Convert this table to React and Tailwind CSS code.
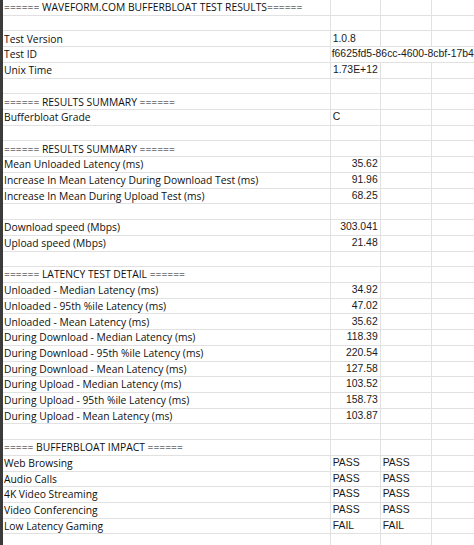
import React from "react";

const rows = [
  { a: "====== WAVEFORM.COM BUFFERBLOAT TEST RESULTS======" },
  {},
  { a: "Test Version", b: "1.0.8" },
  { a: "Test ID", b: "f6625fd5-86cc-4600-8cbf-17b4c2a9e1d3", overflow: true },
  { a: "Unix Time", b: "1.73E+12", num: true },
  {},
  { a: "====== RESULTS SUMMARY ======" },
  { a: "Bufferbloat Grade", b: "C" },
  {},
  { a: "====== RESULTS SUMMARY ======" },
  { a: "Mean Unloaded Latency (ms)", b: "35.62", num: true },
  { a: "Increase In Mean Latency During Download Test (ms)", b: "91.96", num: true },
  { a: "Increase In Mean During Upload Test (ms)", b: "68.25", num: true },
  {},
  { a: "Download speed (Mbps)", b: "303.041", num: true },
  { a: "Upload speed (Mbps)", b: "21.48", num: true },
  {},
  { a: "====== LATENCY TEST DETAIL ======" },
  { a: "Unloaded - Median Latency (ms)", b: "34.92", num: true },
  { a: "Unloaded - 95th %ile Latency (ms)", b: "47.02", num: true },
  { a: "Unloaded - Mean Latency (ms)", b: "35.62", num: true },
  { a: "During Download - Median Latency (ms)", b: "118.39", num: true },
  { a: "During Download - 95th %ile Latency (ms)", b: "220.54", num: true },
  { a: "During Download - Mean Latency (ms)", b: "127.58", num: true },
  { a: "During Upload - Median Latency (ms)", b: "103.52", num: true },
  { a: "During Upload - 95th %ile Latency (ms)", b: "158.73", num: true },
  { a: "During Upload - Mean Latency (ms)", b: "103.87", num: true },
  {},
  { a: "===== BUFFERBLOAT IMPACT ======" },
  { a: "Web Browsing", b: "PASS", c: "PASS" },
  { a: "Audio Calls", b: "PASS", c: "PASS" },
  { a: "4K Video Streaming", b: "PASS", c: "PASS" },
  { a: "Video Conferencing", b: "PASS", c: "PASS" },
  { a: "Low Latency Gaming", b: "FAIL", c: "FAIL" },
  {},
];

function Num({ children }) {
  return <span className="inline-block scale-y-110">{children}</span>;
}

function Row({ r }) {
  const bBase =
    "w-[50px] shrink-0 border-b border-[#e1e1e1] flex items-center whitespace-nowrap leading-none text-[10.4px] text-[#1a1a1a] font-['Liberation_Sans',Arial,sans-serif] relative";
  return (
    <div className="flex h-[15.73px] shrink-0">
      <div className="w-[327.7px] shrink-0 border-b border-r border-[#e1e1e1] flex items-center pl-[1px] whitespace-nowrap leading-none text-[10.3px] text-[#0f0f0f] font-['Open_Sans','Noto_Sans',sans-serif]">
        <span className="inline-block scale-y-[1.12]">{r.a}</span>
      </div>
      {r.overflow ? (
        <div className={bBase + " pl-[1px]"}>
          <span className="absolute left-[1px] inline-block scale-y-110">{r.b}</span>
        </div>
      ) : r.num ? (
        <div className={bBase + " border-r justify-end pr-[2px]"}>
          <Num>{r.b}</Num>
        </div>
      ) : (
        <div className={bBase + " border-r pl-[2px]"}>
          <Num>{r.b}</Num>
        </div>
      )}
      {r.overflow ? (
        <div className="w-[51px] shrink-0 border-b border-[#e1e1e1]" />
      ) : (
        <div className="w-[51px] shrink-0 border-b border-r border-[#e1e1e1] flex items-center pl-[2px] whitespace-nowrap leading-none text-[10.4px] text-[#1a1a1a] font-['Liberation_Sans',Arial,sans-serif]">
          <Num>{r.c}</Num>
        </div>
      )}
      <div className="flex-1 border-b border-[#e1e1e1]" />
    </div>
  );
}

export default function App() {
  return (
    <div className="w-[474px] h-[545px] overflow-hidden bg-white flex">
      <div className="w-[3px] shrink-0 bg-[#3b3b3b]" />
      <div className="flex flex-col flex-1">
        {rows.map((r, i) => (
          <Row key={i} r={r} />
        ))}
      </div>
    </div>
  );
}
